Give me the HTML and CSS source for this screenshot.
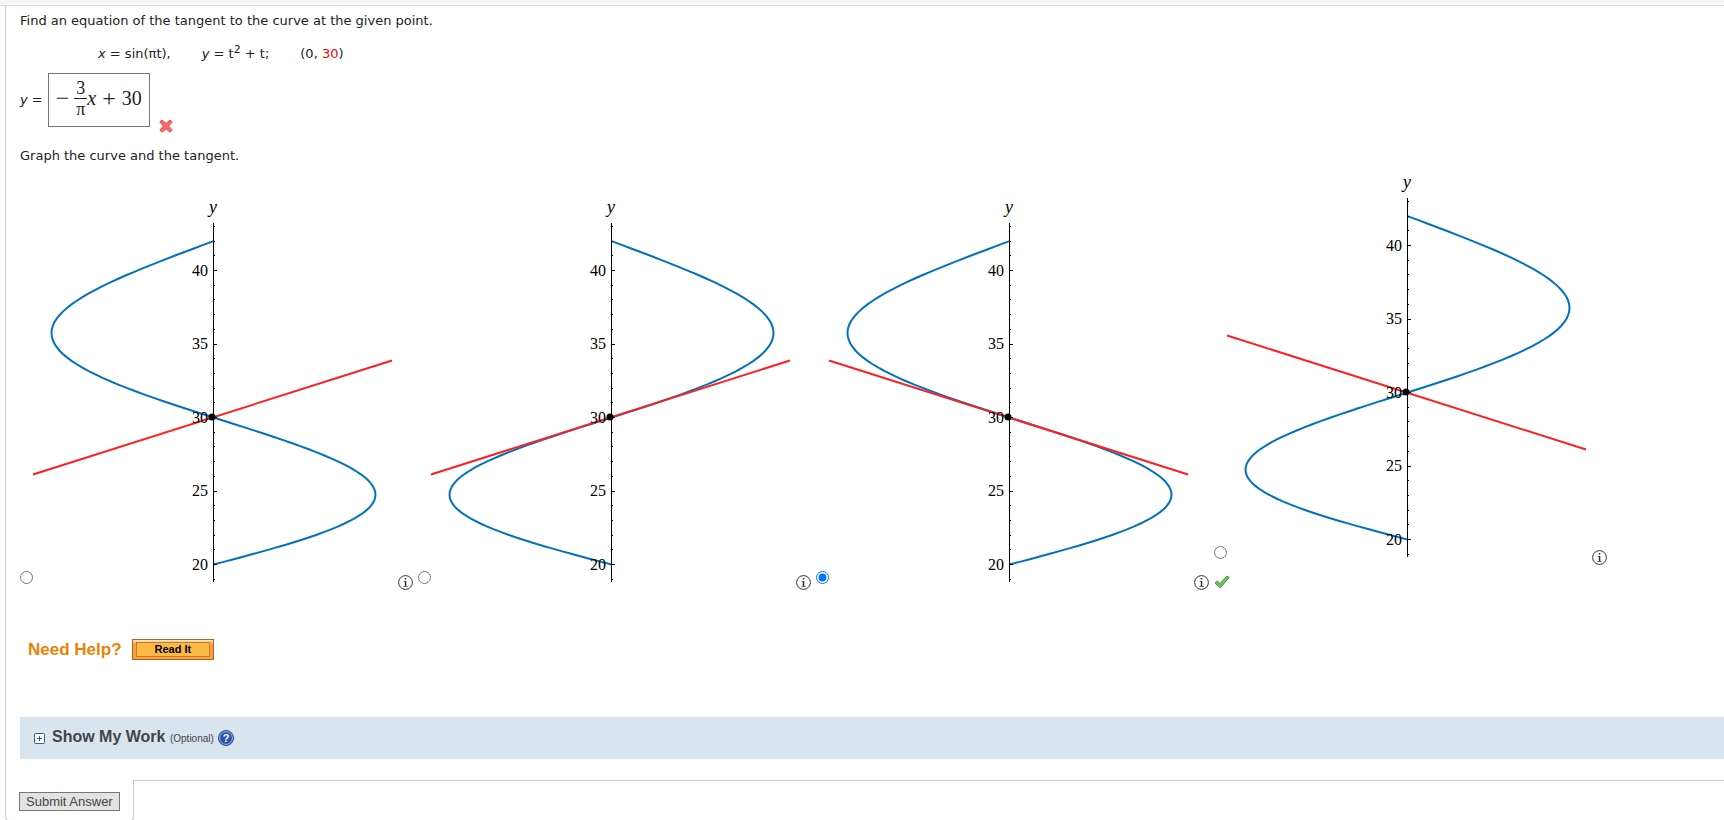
FILE: index.html
```html
<!DOCTYPE html>
<html lang="en">
<head>
    <meta charset="UTF-8">
    <meta name="viewport" content="width=device-width, initial-scale=1.0">
    <title>Tangent to a Parametric Curve</title>
    <link rel="stylesheet" href="styles.css">
</head>
<body>
    <div class="top-strip"></div>

    <main class="question">
        <p class="prompt">Find an equation of the tangent to the curve at the given point.</p>

        <div class="given">
            <span><i>x</i> = sin(πt),</span>
            <span><i>y</i> = t<sup>2</sup> + t;</span>
            <span>(0, <span class="random">30</span>)</span>
        </div>

        <div class="answer">
            <span class="answer-label"><i>y</i> =</span>
            <div class="answer-box">
                <span class="minus">−</span>
                <span class="fraction"><span class="numerator">3</span><span>π</span></span>
                <i>x</i>
                <span class="plus">+</span>
                <span>30</span>
            </div>
            <svg class="wrong" viewBox="0 0 14 14" role="img" aria-label="Incorrect">
                <path d="M3 1 L7 4.4 L11 1 L13.2 3 L9.6 7 L13.2 11 L11 13.2 L7 9.8 L3 13.2 L0.8 11 L4.4 7 L0.8 3 Z" fill="#fb6a66" stroke="#ea4545" stroke-linejoin="round"/>
            </svg>
        </div>

        <p class="prompt">Graph the curve and the tangent.</p>

        <div class="choices">
            <div class="choice">
                <input type="radio" name="graph" id="graph1" aria-label="Graph 1">
                <label for="graph1"><svg class="plot" viewBox="0 0 360 386" data-curve="1" data-line="1"></svg></label>
                <a href="#" class="info" aria-label="Graph 1 description"><svg viewBox="0 0 15 15"><use href="#info-icon"/></svg></a>
            </div>
            <div class="choice">
                <input type="radio" name="graph" id="graph2" aria-label="Graph 2">
                <label for="graph2"><svg class="plot" viewBox="0 0 360 386" data-curve="-1" data-line="1"></svg></label>
                <a href="#" class="info" aria-label="Graph 2 description"><svg viewBox="0 0 15 15"><use href="#info-icon"/></svg></a>
            </div>
            <div class="choice">
                <input type="radio" name="graph" id="graph3" aria-label="Graph 3" checked>
                <label for="graph3"><svg class="plot" viewBox="0 0 360 386" data-curve="1" data-line="-1"></svg></label>
                <a href="#" class="info" aria-label="Graph 3 description"><svg viewBox="0 0 15 15"><use href="#info-icon"/></svg></a>
                <svg class="correct" viewBox="0 0 16 14" role="img" aria-label="Correct">
                    <path d="M1 8.2 L3.3 6 L6 8.6 L13 1 L15.2 2.6 L6.3 12.8 Z" fill="#6fbf63" stroke="#3f9a3c" stroke-linejoin="round"/>
                </svg>
            </div>
            <div class="choice raised">
                <input type="radio" name="graph" id="graph4" aria-label="Graph 4">
                <label for="graph4"><svg class="plot" viewBox="0 0 360 386" data-curve="-1" data-line="-1"></svg></label>
                <a href="#" class="info" aria-label="Graph 4 description"><svg viewBox="0 0 15 15"><use href="#info-icon"/></svg></a>
            </div>
        </div>

        <div class="help">
            <span class="help-title">Need Help?</span>
            <button type="button" class="read-it"><span>Read It</span></button>
        </div>

        <div class="show-work">
            <button type="button" class="expand" aria-label="Expand">
                <svg viewBox="0 0 11 11">
                    <rect x="0.5" y="0.5" width="10" height="10" rx="1" fill="#fff" stroke="#2a5f96"/>
                    <path d="M3 5.5H8M5.5 3V8" stroke="#2a5f96"/>
                </svg>
            </button>
            <h2>Show My Work <small>(Optional)</small></h2>
            <a href="#" class="question-mark" aria-label="Help">
                <svg viewBox="0 0 16 16">
                    <circle cx="8" cy="8" r="7.5" fill="#2d57a5" stroke="#284b8f"/>
                    <circle cx="8" cy="8" r="6.4" fill="none" stroke="#9db8e0"/>
                    <text x="8" y="12" text-anchor="middle">?</text>
                </svg>
            </a>
        </div>
    </main>

    <div class="bottom">
        <div class="submit-tab">
            <button type="submit" class="submit">Submit Answer</button>
        </div>
        <div class="bottom-rest"></div>
    </div>

    <svg class="symbols" aria-hidden="true">
        <symbol id="info-icon" viewBox="0 0 15 15">
            <circle cx="7.5" cy="7.5" r="6.9" fill="#fff" stroke="#333"/>
            <path d="M6.7 3H8.3V4.6H6.7ZM5.6 6H8.3V11H9.6V11.8H5.4V11H6.8V6.8H5.6Z" fill="#333"/>
        </symbol>
    </svg>

    <script src="plots.js"></script>
</body>
</html>
```

FILE: styles.css
```css
body {
    margin: 0;
    background: #fff;
    color: #222;
    font-family: Verdana, "DejaVu Sans", sans-serif;
    font-size: 13px;
    line-height: 16px;
    overflow: hidden;
}

p,
h2 {
    margin: 0;
}

svg {
    display: block;
}

.symbols {
    display: none;
}

.top-strip {
    height: 5px;
    background: #f7f7f7;
    border-bottom: 1px solid #ddd;
}

.question {
    margin-left: 5px;
    padding: 7px 0 21px 14px;
    border-left: 1px solid #ccc;
}

.given {
    display: flex;
    gap: 31px;
    margin: 17px 0 11px 78px;
}

.given sup {
    font-size: 11px;
    line-height: 0;
}

.random {
    color: #e00;
}

.answer {
    display: flex;
    align-items: center;
    margin-bottom: 21px;
}

.answer-box {
    display: flex;
    align-items: center;
    box-sizing: border-box;
    height: 54px;
    margin-left: 5px;
    padding: 0 7px 4px;
    border: 1px solid #777;
    color: #222;
    font-family: "Liberation Serif", "Times New Roman", serif;
    font-size: 20px;
}

.minus {
    margin-right: 5px;
    font-size: 24px;
}

.plus {
    margin: 0 6px;
    font-size: 24px;
}

.fraction {
    display: flex;
    flex-direction: column;
    align-items: center;
    font-size: 18px;
    line-height: 20px;
}

.numerator {
    padding: 0 2px;
    border-bottom: 1px solid #222;
}

.wrong {
    align-self: flex-end;
    width: 14px;
    height: 14px;
    margin: 0 0 -6px 9px;
}

.choices {
    display: flex;
    align-items: flex-end;
    gap: 5px;
    padding-top: 7px;
}

.choice {
    position: relative;
    display: flex;
    flex: none;
    align-items: flex-end;
}

.choice.raised {
    margin-bottom: 25px;
}

.choice input {
    width: 13px;
    height: 13px;
    margin: 0 0 -2px;
}

.plot {
    width: 360px;
    height: 386px;
    overflow: visible;
}

.info {
    width: 15px;
    height: 15px;
    margin: 0 0 -8px 5px;
}

.correct {
    position: absolute;
    bottom: -7px;
    left: 100%;
    width: 16px;
    height: 14px;
    margin-left: 5px;
}

.tick-label {
    font-family: "Liberation Serif", serif;
    font-size: 16px;
    text-anchor: end;
}

.axis-label {
    font-family: "Liberation Serif", serif;
    font-size: 18px;
    font-style: italic;
    text-anchor: middle;
}

.help {
    display: flex;
    align-items: center;
    gap: 10px;
    margin: 57px 0 57px 8px;
}

.help-title {
    color: #e98300;
    font: bold 17px/20px "Liberation Sans", Arial, sans-serif;
}

.read-it {
    padding: 2px 3px;
    border: 1px solid #a8662a;
    background: linear-gradient(#fff0d8, #fc9f36 20%, #fc9f36);
    color: #000;
    font: bold 11px/13px "Liberation Sans", Arial, sans-serif;
}

.read-it span {
    display: block;
    padding: 0 18px;
    border: 1px solid #c27a2c;
    background: #fdb945;
}

.show-work {
    display: flex;
    align-items: center;
    height: 42px;
    padding-left: 14px;
    background: #d9e5ee;
    color: #444;
    font-family: "Liberation Sans", Arial, sans-serif;
}

.expand {
    padding: 0;
    border: none;
    background: none;
}

.expand svg {
    width: 11px;
    height: 11px;
}

.show-work h2 {
    margin: 0 4px 0 7px;
    font-size: 16px;
}

.show-work small {
    font-size: 10px;
    font-weight: normal;
}

.question-mark svg {
    width: 16px;
    height: 16px;
}

.question-mark text {
    fill: #fff;
    font: bold 11px "Liberation Sans", Arial, sans-serif;
}

.bottom {
    display: flex;
    margin-left: 5px;
}

.submit-tab {
    padding: 12px 13px 9px;
    border: 1px solid #ccc;
    border-top: none;
    border-radius: 0 0 4px 4px;
}

.submit {
    padding: 0 6px;
    border: 1px solid #777;
    background: #e2e2e2;
    color: #444;
    font: 13px/17px "Liberation Sans", Arial, sans-serif;
}

.bottom-rest {
    flex: 1;
    border-top: 1px solid #ccc;
}
```

FILE: plots.js
```js
// Each plot shows x = sin(pi t), y = t^2 + t for 4 <= t <= 6
const AXIS_X = 180;
const X_SCALE = 162;
const Y_SCALE = 14.7;

function toY(value) {
    return 368.5 - (value - 20) * Y_SCALE;
}

function drawPlot(svg) {
    const curve = Number(svg.dataset.curve);
    const line = Number(svg.dataset.line);
    const points = [];

    for (let i = 0; i <= 100; i++) {
        const t = 4 + i / 50;
        const x = AXIS_X + 0.5 + curve * X_SCALE * Math.sin(Math.PI * t);
        points.push(x.toFixed(2) + "," + toY(t * t + t).toFixed(2));
    }

    let ticks = "";
    let labels = "";
    for (let y = 19; y <= 43; y++) {
        const length = y % 5 === 0 ? 4 : 2;
        ticks += `M${AXIS_X} ${Math.floor(toY(y)) + 0.5}h${length}`;
        if (y % 5 === 0) {
            labels += `<text class="tick-label" x="${AXIS_X - 5}" y="${Math.round(toY(y)) + 5}">${y}</text>`;
        }
    }

    svg.innerHTML = `
        <polyline points="${points.join(" ")}" fill="none" stroke="#0072bd" stroke-width="2"/>
        <path d="M0 ${221.5 + line * 57}L359 ${221.5 - line * 57}" stroke="#ff1f1f" stroke-width="2"/>
        <path d="M${AXIS_X + 0.5} 27V386${ticks}" fill="none" stroke="#000"/>
        ${labels}
        <text class="axis-label" x="${AXIS_X}" y="17">y</text>
        <circle cx="${AXIS_X - 1}" cy="221" r="3.5"/>`;
}

document.querySelectorAll(".plot").forEach(drawPlot);
```
